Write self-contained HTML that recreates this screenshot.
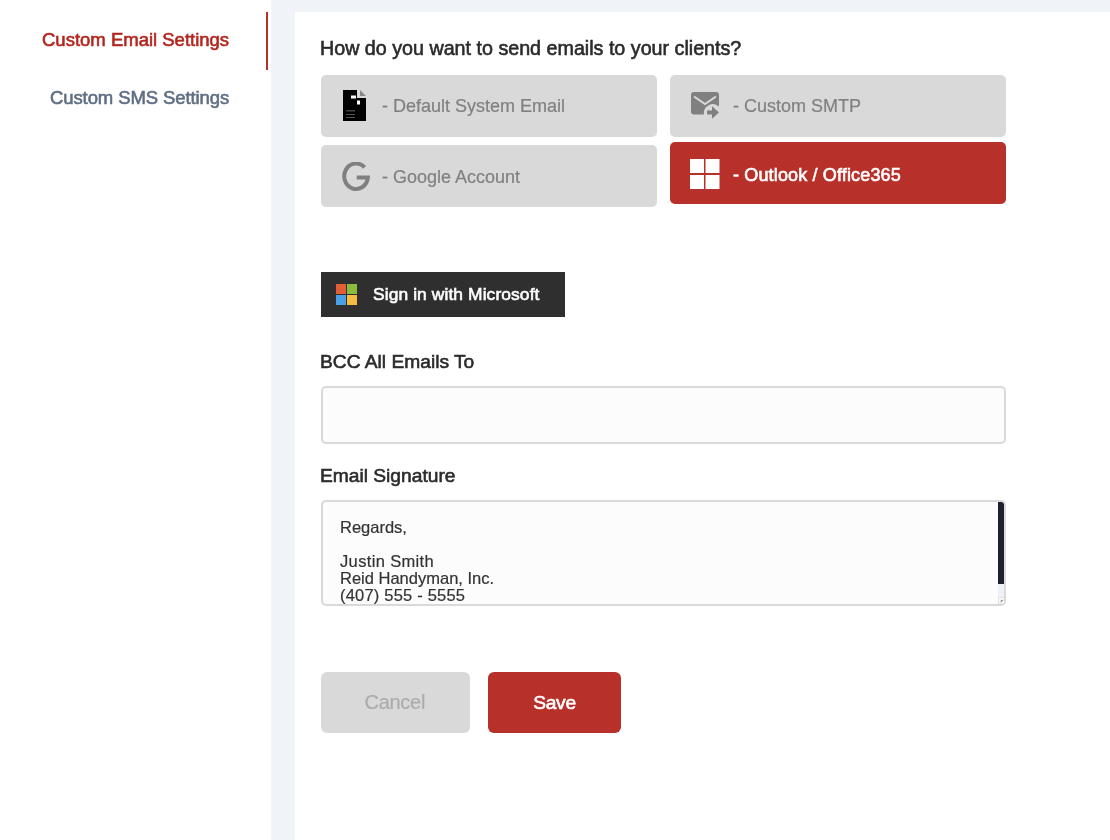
<!DOCTYPE html>
<html>
<head>
<meta charset="utf-8">
<style>
html,body{margin:0;padding:0;}
body{width:1110px;height:840px;overflow:hidden;position:relative;background:#fff;font-family:"Liberation Sans",sans-serif;}
.abs{position:absolute;white-space:nowrap;}
.side,.abs,.lbl,.label,.txt{will-change:transform;}
.med{-webkit-text-stroke:0.6px currentColor;}
.reg{-webkit-text-stroke:0.2px currentColor;}
#graybg{position:absolute;left:271px;top:0;width:839px;height:840px;background:#f0f4f8;}
#panel{position:absolute;left:295px;top:12px;width:815px;height:828px;background:#fff;}
#redbar{position:absolute;left:266px;top:12px;width:2px;height:58px;background:#b8302a;}
.side{position:absolute;right:881px;font-size:18.5px;line-height:20px;}
#s1{top:30px;color:#b3261f;}
#s2{top:88px;color:#5f6e84;letter-spacing:-0.1px;}
#heading{left:319.6px;top:36.8px;font-size:19.7px;line-height:22px;color:#2b2b2b;}
.opt{position:absolute;width:336px;height:62px;background:#d9d9d9;border-radius:5px;box-sizing:border-box;}
.opt .lbl{position:absolute;left:61.4px;top:20px;font-size:18px;line-height:22px;color:#808080;white-space:nowrap;}
.opt svg{position:absolute;}
#o1{left:321px;top:75px;}
#o2{left:670px;top:75px;}
#o2 .lbl{left:62.6px;}
#o3{left:321px;top:145px;}
#o3 .lbl{top:20.5px;}
#o4{left:670px;top:142px;background:#b8302a;}
#o4 .lbl{color:#fff;top:21.5px;left:62.6px;letter-spacing:0.15px;}
#ms{position:absolute;left:321px;top:272px;width:244px;height:45px;background:#2f2f2f;}
#ms .lbl{position:absolute;left:51.5px;top:11.5px;font-size:17.4px;line-height:20px;color:#fff;font-weight:normal;-webkit-text-stroke:0.6px #fff;letter-spacing:0.1px;white-space:nowrap;}
.label{position:absolute;left:319.6px;font-size:19.2px;line-height:22px;color:#2b2b2b;white-space:nowrap;}
#l1{top:351.4px;}
#l2{top:465.4px;}
.field{position:absolute;left:321px;width:685px;box-sizing:border-box;border:2px solid #d9d9d9;border-radius:5px;background:#fcfcfc;}
#inp{top:386px;height:58px;}
#ta{top:500px;height:106px;overflow:hidden;}
#ta .txt{position:absolute;left:17px;top:17px;font-size:16.5px;line-height:17px;color:#333;white-space:pre;}
#thumb{position:absolute;left:675px;top:0px;width:7px;height:82px;background:#1c2130;}
#track{position:absolute;left:675px;top:82px;width:7px;height:13px;background:#eef2f8;}
#grip{position:absolute;left:675px;top:95px;width:7px;height:7px;box-sizing:border-box;border:1px solid #e2e2e2;background:#fafafa;}
.btn{position:absolute;top:672px;height:61px;border-radius:6px;}
#cancel{left:321px;width:149px;background:#d9d9d9;}
#save{left:488px;width:133px;background:#b8302a;}
.btn .lbl{position:absolute;left:0;right:0;top:18.5px;text-align:center;font-size:20px;letter-spacing:-0.3px;line-height:22px;white-space:nowrap;}
#cancel .lbl{color:#acacac;top:18.5px;left:-0.6px;}
#save .lbl{color:#fff;letter-spacing:-0.1px;font-size:19.2px;top:19.5px;letter-spacing:-0.3px;}
</style>
</head>
<body>
<div id="graybg"></div>
<div id="panel"></div>
<div id="redbar"></div>
<div class="side med" id="s1">Custom Email Settings</div>
<div class="side med" id="s2">Custom SMS Settings</div>

<div class="abs med" id="heading">How do you want to send emails to your clients?</div>

<div class="opt" id="o1">
  <svg style="left:22px;top:15px" width="24" height="31" viewBox="0 0 24 31">
    <path d="M0 0H14V8H23V31H0Z" fill="#000"/>
    <path d="M17 0L23 6H17Z" fill="#888"/>
    <rect x="8" y="5.5" width="5" height="3" fill="#fff"/>
    <rect x="14" y="10.5" width="3" height="4" fill="#fff"/>
    <rect x="3" y="20" width="9" height="1.5" fill="#444"/>
    <rect x="3" y="24" width="9" height="1" fill="#555"/>
    <rect x="3" y="27" width="9" height="1" fill="#555"/>
  </svg>
  <div class="lbl reg">- Default System Email</div>
</div>
<div class="opt" id="o2">
  <svg style="left:21px;top:16px" width="29" height="28" viewBox="0 0 29 28">
    <path d="M3 1H25Q28 1 28 4V15.5A9 9 0 0 0 13 23.5H3Q0 23.5 0 20.5V4Q0 1 3 1Z" fill="#808080"/>
    <path d="M3 5.5L14 13L25 5.5" stroke="#d9d9d9" stroke-width="2" fill="none"/>
    <path d="M16 19.5H21V15.2L28 21.5L21 27.8V23.5H16Z" fill="#808080"/>
  </svg>
  <div class="lbl reg">- Custom SMTP</div>
</div>
<div class="opt" id="o3">
  <svg style="left:21px;top:17px" width="28" height="30" viewBox="0 0 28 30">
    <path d="M22.6 5.4A11.85 12.75 0 1 0 25.85 15.5H14.7" stroke="#808080" stroke-width="4" fill="none"/>
  </svg>
  <div class="lbl reg">- Google Account</div>
</div>
<div class="opt" id="o4">
  <svg style="left:20px;top:17px" width="30" height="31" viewBox="0 0 30 31">
    <rect x="0" y="0" width="14" height="14" fill="#fff"/>
    <rect x="15.5" y="0" width="14" height="14" fill="#fff"/>
    <rect x="0" y="16" width="14" height="14" fill="#fff"/>
    <rect x="15.5" y="16" width="14" height="14" fill="#fff"/>
  </svg>
  <div class="lbl med">- Outlook / Office365</div>
</div>

<div id="ms">
  <svg style="position:absolute;left:15px;top:12px" width="22" height="22" viewBox="0 0 22 22">
    <rect x="0" y="0" width="10" height="10" fill="#e25e36"/>
    <rect x="11" y="0" width="10" height="10" fill="#8cba3b"/>
    <rect x="0" y="11" width="10" height="10" fill="#4aa0e6"/>
    <rect x="11" y="11" width="10" height="10" fill="#f5bb43"/>
  </svg>
  <div class="lbl">Sign in with Microsoft</div>
</div>

<div class="label med" id="l1">BCC All Emails To</div>
<div class="field" id="inp"></div>
<div class="label med" id="l2">Email Signature</div>
<div class="field" id="ta">
  <div class="txt reg">Regards,

<span style="letter-spacing:0.35px">Justin Smith</span>
Reid Handyman, Inc.
<span style="letter-spacing:0.2px">(407) 555 - 5555</span></div>
  <div id="thumb"></div>
  <div id="track"></div>
  <div id="grip"><svg width="5" height="5" viewBox="0 0 5 5" style="position:absolute;left:0;top:0"><path d="M1 4L3 1.5L4 3Z" fill="#666"/></svg></div>
</div>

<div class="btn" id="cancel"><div class="lbl reg">Cancel</div></div>
<div class="btn" id="save"><div class="lbl med">Save</div></div>
</body>
</html>
